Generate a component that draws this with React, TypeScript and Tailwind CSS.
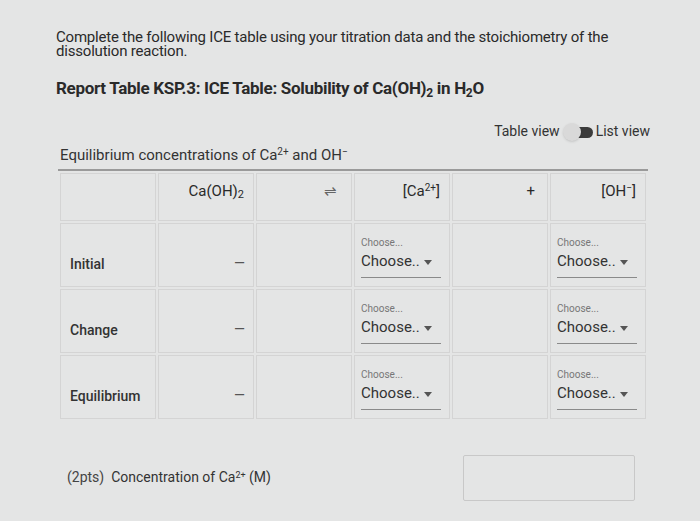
import React from "react";

function Choose() {
  return (
    <div className="flex flex-col w-[80px]">
      <span className="text-[10px] leading-[10px] text-[#777]">Choose...</span>
      <div className="flex items-center gap-1 mt-[5px] text-[15px] leading-[16px] text-[#333]">
        <span>Choose..</span>
        <svg width="8" height="5" viewBox="0 0 8 5" className="mt-[3px]">
          <path d="M0 0 L8 0 L4 5 Z" fill="#555" />
        </svg>
      </div>
      <div className="mt-[8px] h-px bg-[#8a8a8a]" />
    </div>
  );
}

const rows = ["Initial", "Change", "Equilibrium"];

export default function App() {
  return (
    <div
      className="w-[700px] h-[521px] overflow-hidden bg-[#e4e5e5] text-[#2a2a2a]"
      style={{ fontFamily: "Roboto, 'Liberation Sans', sans-serif" }}
    >
      <div className="pl-[56px] pt-[30px] pr-[60px]">
        <p className="text-[15px] leading-[14px] tracking-[-0.2px]">
          Complete the following ICE table using your titration data and the stoichiometry of the dissolution reaction.
        </p>
        <h2 className="mt-[20px] text-[17px] font-bold tracking-[-0.3px] leading-[20px]">
          Report Table KSP.3: ICE Table: Solubility of Ca(OH)<sub className="text-[12px]">2</sub> in H<sub className="text-[12px]">2</sub>O
        </h2>
      </div>

      <div className="flex justify-end items-center pr-[50px] mt-[23px] text-[14px] text-[#333]">
        <span>Table view</span>
        <div className="relative mx-[3px] w-[30px] h-[14px]">
          <div className="absolute left-[8px] right-0 top-[2px] h-[11px] rounded-full bg-[#3b3b3b]" />
          <div className="absolute left-0 top-[-2px] w-[18px] h-[18px] rounded-full bg-[#d9d9d9] shadow" />
        </div>
        <span>List view</span>
      </div>

      <div className="pl-[60px] mt-[2px] text-[15px] text-[#333]">
        Equilibrium concentrations of Ca<sup className="text-[10px]">2+</sup> and OH<sup className="text-[10px]">−</sup>
      </div>

      <div className="ml-[58px] mt-[2px] w-[590px] border-t-2 border-[#9a9a9a] pt-[2px]">
        <div className="grid grid-cols-6 gap-[2px] px-[2px]">
          <div className="h-[48px] border border-[#d4d4d4]" />
          <div className="h-[48px] border border-[#d4d4d4] flex justify-end pt-[6px] pr-[9px] text-[15px]">
            <span>Ca(OH)<sub className="text-[11px]">2</sub></span>
          </div>
          <div className="h-[48px] border border-[#d4d4d4] flex justify-end pt-[6px] pr-[14px] text-[15px] text-[#666]">
            ⇌
          </div>
          <div className="h-[48px] border border-[#d4d4d4] flex justify-end pt-[6px] pr-[9px] text-[15px]">
            <span>[Ca<sup className="text-[10px]">2+</sup>]</span>
          </div>
          <div className="h-[48px] border border-[#d4d4d4] flex justify-end pt-[6px] pr-[12px] text-[15px]">
            +
          </div>
          <div className="h-[48px] border border-[#d4d4d4] flex justify-end pt-[6px] pr-[9px] text-[15px]">
            <span>[OH<sup className="text-[10px]">−</sup>]</span>
          </div>

          {rows.map((r) => (
            <React.Fragment key={r}>
              <div className="h-[64px] border border-[#d4d4d4] flex items-end pb-[11px] pl-[9px] text-[14px] font-medium text-[#333]">
                {r}
              </div>
              <div className="h-[64px] border border-[#d4d4d4] flex items-end justify-end pb-[12px] pr-[8px] text-[14px] text-[#555]">
                —
              </div>
              <div className="h-[64px] border border-[#d4d4d4]" />
              <div className="h-[64px] border border-[#d4d4d4] flex items-end pb-[8px] pl-[6px]">
                <Choose />
              </div>
              <div className="h-[64px] border border-[#d4d4d4]" />
              <div className="h-[64px] border border-[#d4d4d4] flex items-end pb-[8px] pl-[6px]">
                <Choose />
              </div>
            </React.Fragment>
          ))}
        </div>
      </div>

      <div className="flex items-center pl-[67px] pr-[65px] mt-[36px]">
        <span className="text-[14px] text-[#444]">(2pts)</span>
        <span className="ml-[7px] text-[14px] text-[#333]">
          Concentration of Ca<sup className="text-[9px]">2+</sup> (M)
        </span>
        <div className="ml-auto w-[172px] h-[46px] border border-[#c8c8c8] rounded-[2px]" />
      </div>
    </div>
  );
}
